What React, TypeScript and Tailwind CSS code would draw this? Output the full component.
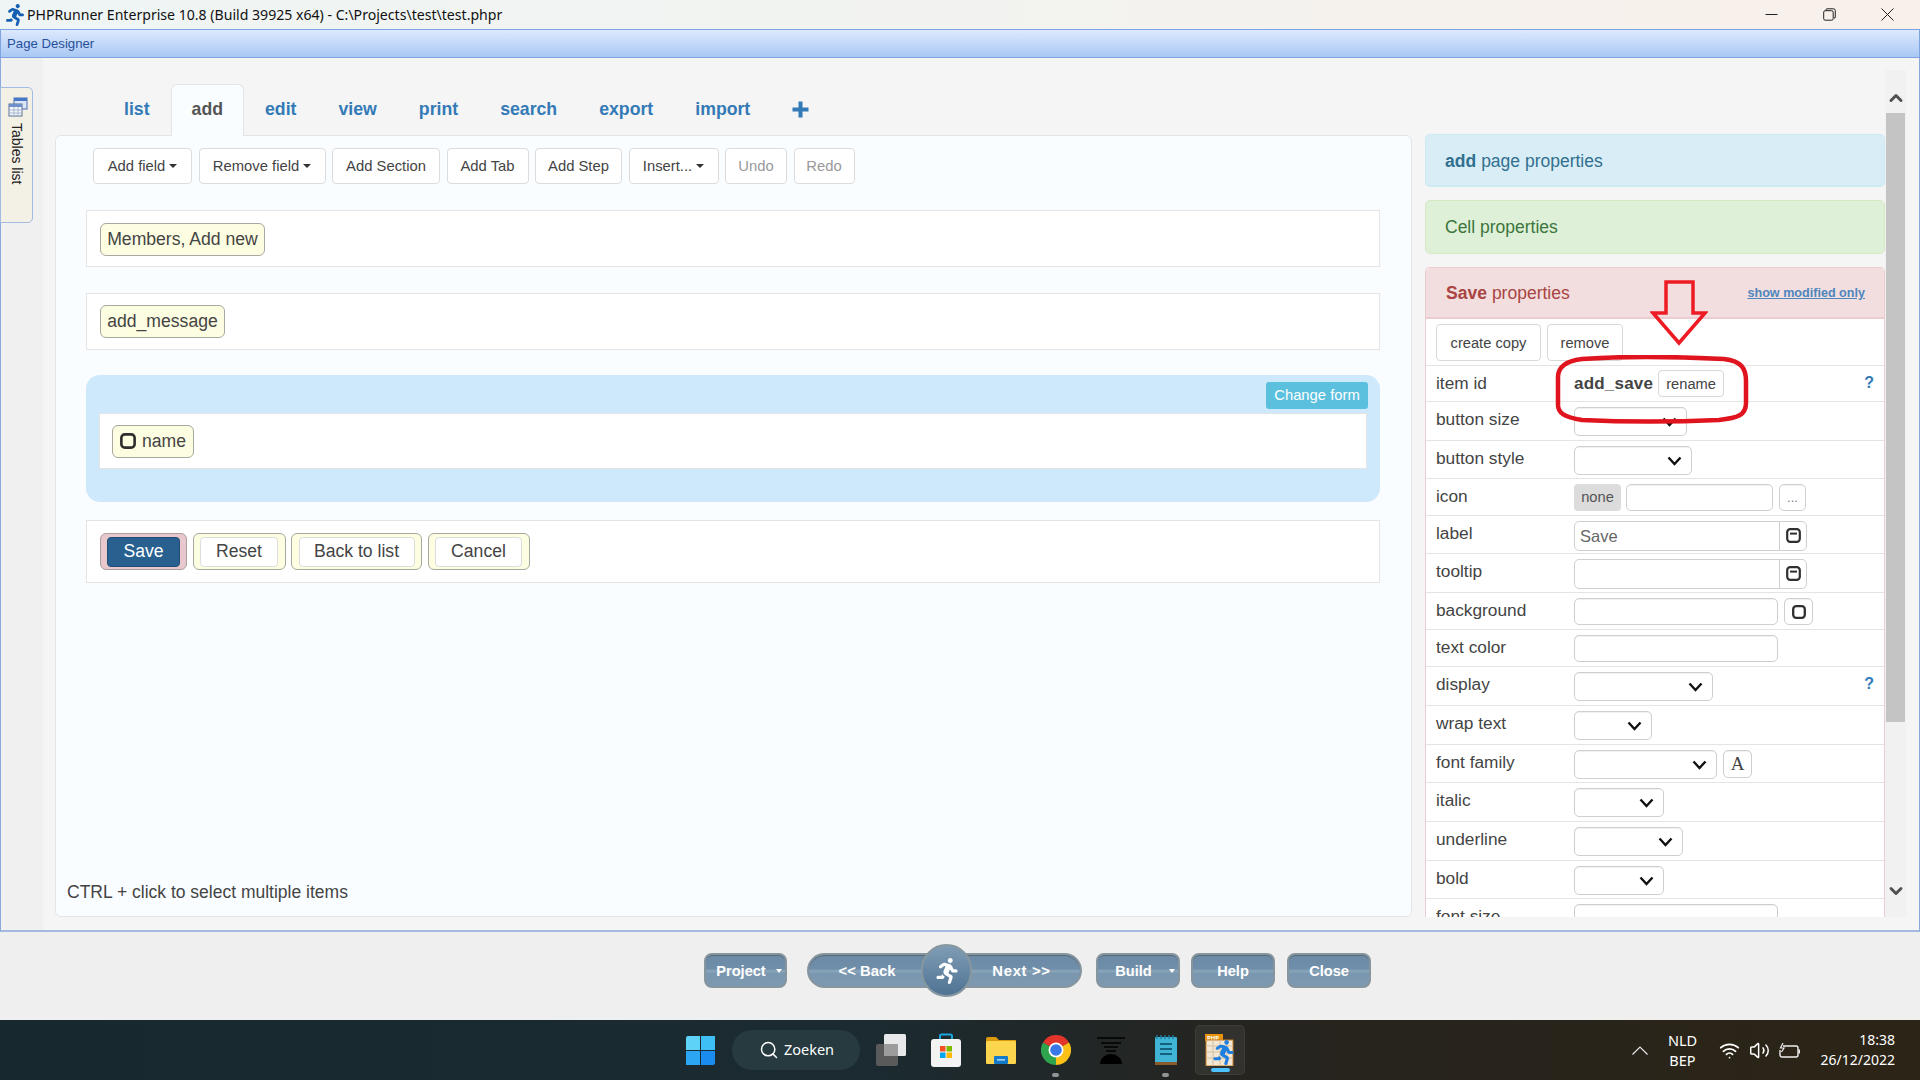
import React from "react";
import { FaRunning } from "react-icons/fa";
import { Search, Wifi, Volume2, ChevronUp } from "lucide-react";

function Chevron({ className = "" }: { className?: string }) {
  return (
    <svg width="15" height="10" viewBox="0 0 15 10" className={className}>
      <path d="M1.5 1.5 L7.5 8 L13.5 1.5" fill="none" stroke="#111" strokeWidth="2.4" />
    </svg>
  );
}

function Sel({ w }: { w: string }) {
  return (
    <div className={`${w} h-[29px] mt-[5px] bg-white border border-[#cfcfcf] rounded-[5px] flex items-center justify-end pr-[9px] shadow-[inset_0_1px_1px_rgba(0,0,0,0.06)]`}>
      <Chevron />
    </div>
  );
}

function Inp({ className = "", children }: { className?: string; children?: React.ReactNode }) {
  return (
    <div className={`h-[27px] mt-[5px] bg-white border border-[#cfcfcf] rounded-[5px] flex items-center shadow-[inset_0_1px_1px_rgba(0,0,0,0.06)] ${className}`}>
      {children}
    </div>
  );
}

function LangIcon() {
  return (
    <svg width="15" height="15" viewBox="0 0 15 15">
      <rect x="1.2" y="1.2" width="12.6" height="12.6" rx="3" fill="none" stroke="#2f2f2f" strokeWidth="2.2" />
      <rect x="4" y="4.6" width="7" height="2" fill="#2f2f2f" />
    </svg>
  );
}

function SquareIcon({ size = 14 }: { size?: number }) {
  return (
    <svg width={size} height={size} viewBox="0 0 14 14">
      <rect x="1.2" y="1.2" width="11.6" height="11.6" rx="3" fill="none" stroke="#2f2f2f" strokeWidth="2.3" />
    </svg>
  );
}

function InputGroup({ value }: { value?: string }) {
  return (
    <div className="w-[233px] h-[30px] mt-[5px] bg-white border border-[#cfcfcf] rounded-[5px] flex items-center">
      <div className="w-[204px] pl-[5px] text-[16.5px] text-[#666]">{value}</div>
      <div className="flex-1 h-full border-l border-[#cfcfcf] flex items-center justify-center pb-[2px]">
        <LangIcon />
      </div>
    </div>
  );
}

function Row({ label, h, help, children }: { label: string; h: string; help?: boolean; children?: React.ReactNode }) {
  return (
    <div className={`${h} shrink-0 border-b border-[#e4e4e4] flex items-start`}>
      <div className="w-[148px] pl-[10px] pt-[7px] text-[17.3px] leading-[20px] text-[#444] shrink-0">{label}</div>
      <div className="flex items-start flex-1">{children}</div>
      {help && <div className="pt-[7px] pr-[10px] text-[16px] font-bold leading-[20px] text-[#337ab7]">?</div>}
    </div>
  );
}

function Tool({ w, muted, caret, children }: { w: string; muted?: boolean; caret?: boolean; children: React.ReactNode }) {
  return (
    <div className={`${w} h-[36px] bg-white border border-[#dcdcdc] rounded-[4px] flex items-center justify-center gap-[4px] text-[14.8px] ${muted ? "text-[#999]" : "text-[#444]"}`}>
      {children}
      {caret && <span className="w-0 h-0 border-x-[4px] border-t-[4px] border-x-transparent border-t-[#333]" />}
    </div>
  );
}

function Chip({ children, className = "" }: { children: React.ReactNode; className?: string }) {
  return (
    <div className={`h-[33px] bg-[#fdfde2] border border-[#a8a8a0] rounded-[6px] flex items-center text-[17.6px] text-[#444] ${className}`}>
      {children}
    </div>
  );
}

function FormBtn({ outer, inner, label }: { outer: string; inner: string; label: string }) {
  return (
    <div className={`${outer} h-[37px] bg-[#fdfde2] border border-[#a8a8a0] rounded-[6px] flex items-center justify-center`}>
      <div className={`${inner} h-[30px] bg-white border border-[#ddd] rounded-[4px] flex items-center justify-center text-[17.6px] text-[#444]`}>{label}</div>
    </div>
  );
}

const steel = "bg-[linear-gradient(to_bottom,#6c8aa4_0%,#6f8eaa_44%,#8ba6bb_52%,#7a97af_60%,#7c99b1_100%)]";

function Steel({ w, caret, children }: { w: string; caret?: boolean; children: React.ReactNode }) {
  return (
    <div className={`${w} h-[35px] ${steel} border-2 border-[#87959e] rounded-[8px] shadow-[inset_0_1px_0_#566a7a] relative flex items-center justify-center pt-[2px] text-white font-bold text-[14.6px] ${caret ? "pr-[9px]" : ""}`}>
      {children}
      {caret && <span className="absolute right-[3px] top-[14px] w-0 h-0 border-x-[3px] border-t-[4px] border-x-transparent border-t-white" />}
    </div>
  );
}

function Slot({ dot, children }: { dot?: boolean; children: React.ReactNode }) {
  return (
    <div className="w-[55px] h-[60px] flex items-center justify-center relative">
      {children}
      {dot && <span className="absolute bottom-[3px] left-[24px] w-[7px] h-[4px] rounded-full bg-[#8f9496]" />}
    </div>
  );
}

const tabs = ["list", "add", "edit", "view", "print", "search", "export", "import"];

export default function App() {
  return (
    <div className="w-[1920px] h-[1080px] relative overflow-hidden flex flex-col font-['Liberation_Sans',Arial,sans-serif] text-[#333]">
      {/* title bar */}
      <div className="h-[29px] shrink-0 flex items-center bg-[linear-gradient(to_right,#eff5f5,#f2f3f0_50%,#f9f0ea)]">
        <div className="w-[27px] pl-[2px] shrink-0 flex justify-center">
          <FaRunning className="text-[#1660b4]" size={22} />
        </div>
        <div className="font-['Noto_Sans',sans-serif] text-[14.1px] text-[#111] whitespace-nowrap">
          {"PHPRunner Enterprise 10.8 (Build 39925 x64) - C:\\Projects\\test\\test.phpr"}
        </div>
        <div className="ml-auto flex items-center pr-[26px] gap-[45px]">
          <svg width="13" height="13" viewBox="0 0 13 13"><path d="M0.5 6.5 H12.5" stroke="#222" strokeWidth="1" /></svg>
          <svg width="13" height="13" viewBox="0 0 13 13"><rect x="0.7" y="2.7" width="9.5" height="9.5" rx="1.5" fill="none" stroke="#222" /><path d="M3 2.5 V1.8 A1 1 0 0 1 4 0.8 H10.5 A1.8 1.8 0 0 1 12.3 2.6 V9 A1 1 0 0 1 11 10" fill="none" stroke="#222" /></svg>
          <svg width="13" height="13" viewBox="0 0 13 13"><path d="M0.5 0.5 L12.5 12.5 M12.5 0.5 L0.5 12.5" stroke="#222" strokeWidth="1" /></svg>
        </div>
      </div>

      {/* page designer */}
      <div className="h-[29px] shrink-0 border border-[#7ea3e2] bg-[linear-gradient(to_bottom,#dde9fd,#a9c8f4)] flex items-center pl-[6px] text-[13.2px] text-[#27509c]">
        Page Designer
      </div>

      {/* main */}
      <div className="h-[874px] shrink-0 flex border-x border-b-2 border-x-[#8aa8dc] border-b-[#a3b9e0] bg-[#f5f5f5]">
        {/* left strip */}
        <div className="w-[54px] shrink-0 flex">
          <div className="w-[42px] bg-[#f0f0f0] pt-[29px]">
            <div className="w-[33px] h-[136px] -ml-px bg-[#f3f0e6] border border-[#a3bbe2] rounded-r-[5px] flex flex-col items-center pt-[9px]">
              <svg width="20" height="20" viewBox="0 0 20 20" className="ml-[2px]">
                <rect x="6" y="1" width="13" height="11" fill="#dbe6f7" stroke="#4a6fb5" />
                <rect x="6" y="1" width="13" height="3" fill="#4a78c8" />
                <rect x="1" y="7" width="13" height="12" fill="#f4f7fc" stroke="#5a6f95" />
                <rect x="1" y="7" width="13" height="3" fill="#6d8fca" />
                <path d="M1 13 H14 M1 16 H14 M6 10 V19 M10 10 V19" stroke="#a8b6cf" />
              </svg>
              <div className="mt-[6px] text-[14px] leading-[16px] text-[#222] [writing-mode:vertical-rl]">Tables list</div>
            </div>
          </div>
        </div>

        {/* center */}
        <div className="w-[1357px] shrink-0 flex flex-col">
          <div className="h-[78px] shrink-0 flex items-end pl-[48px] relative z-10 -mb-px">
            {tabs.map((t) =>
              t === "add" ? (
                <div key={t} className="h-[52px] px-[20px] pb-[2px] flex items-center bg-[#fafdff] border border-b-0 border-[#e4e4e4] rounded-t-[6px] text-[17.7px] font-bold text-[#555]">{t}</div>
              ) : (
                <div key={t} className="h-[52px] px-[21px] pb-[2px] flex items-center text-[17.7px] font-bold text-[#337ab7]">{t}</div>
              )
            )}
            <div className="h-[52px] px-[21px] pb-[2px] flex items-center">
              <svg width="17" height="17" viewBox="0 0 17 17"><path d="M8.5 0.5 V16.5 M0.5 8.5 H16.5" stroke="#337ab7" strokeWidth="4" /></svg>
            </div>
          </div>
          <div className="flex-1 mb-[13px] bg-[#fafdff] border border-[#e4e4e4] rounded-[6px] flex flex-col">
            <div className="pt-[12px] pl-[37px] flex gap-[6.5px]">
              <Tool w="w-[99px]" caret>Add field</Tool>
              <Tool w="w-[127px]" caret>Remove field</Tool>
              <Tool w="w-[108px]">Add Section</Tool>
              <Tool w="w-[82px]">Add Tab</Tool>
              <Tool w="w-[87px]">Add Step</Tool>
              <Tool w="w-[90px]" caret>Insert...</Tool>
              <Tool w="w-[62px]" muted>Undo</Tool>
              <Tool w="w-[61px]" muted>Redo</Tool>
            </div>

            <div className="ml-[30px] w-[1294px] mt-[26px] flex flex-col">
              <div className="h-[57px] bg-white border border-[#e4e4e4] flex items-center pl-[13px] pt-[1px]">
                <Chip className="w-[165px] justify-center">Members, Add new</Chip>
              </div>
              <div className="h-[57px] mt-[26px] bg-white border border-[#e4e4e4] flex items-center pl-[13px]">
                <Chip className="w-[125px] justify-center">add_message</Chip>
              </div>
              <div className="h-[127px] mt-[25px] bg-[#cfe9fc] rounded-[14px] px-[13px] flex flex-col">
                <div className="h-[38px] shrink-0 flex justify-end pt-[7px] -mr-px">
                  <div className="w-[102px] h-[27px] bg-[#5bc0de] rounded-[3px] flex items-center justify-center text-[14.8px] text-white">Change form</div>
                </div>
                <div className="h-[56px] bg-white border border-[#e4e4e4] flex items-center pl-[12px]">
                  <Chip className="w-[82px] pl-[7px] gap-[6px]">
                    <SquareIcon size={16} /> name
                  </Chip>
                </div>
              </div>
              <div className="h-[63px] mt-[18px] bg-white border border-[#e4e4e4] flex items-center pl-[13px] gap-[5.5px]">
                <div className="w-[87px] h-[37px] bg-[#e8c8cc] border border-[#a8a0a0] rounded-[6px] flex items-center justify-center">
                  <div className="w-[73px] h-[30px] bg-[#286090] border border-[#204d74] rounded-[4px] flex items-center justify-center text-[17.6px] text-white">Save</div>
                </div>
                <FormBtn outer="w-[93px]" inner="w-[78px]" label="Reset" />
                <FormBtn outer="w-[131px]" inner="w-[116px]" label="Back to list" />
                <FormBtn outer="w-[102px]" inner="w-[87px]" label="Cancel" />
              </div>
            </div>

            <div className="mt-auto mb-[14px] pl-[11px] text-[17.5px] leading-[20px] text-[#444]">CTRL + click to select multiple items</div>
          </div>
        </div>

        {/* right */}
        <div className="w-[507px] shrink-0 pl-[13px] pt-[12px] pb-[13px] flex">
          <div className="w-[460px] shrink-0 pt-[64px] flex flex-col overflow-hidden">
            <div className="h-[53px] shrink-0 bg-[#d9edf7] border-x border-t border-b-2 border-[#cdeaf3] rounded-[5px] flex items-center pt-[2px] pl-[19px] text-[17.5px] text-[#31708f]">
              <b className="mr-[5px]">add</b> page properties
            </div>
            <div className="h-[54px] shrink-0 mt-[13px] bg-[#dff0d8] border border-[#d6e9c6] rounded-[5px] flex items-center pt-[1px] pl-[19px] text-[17.5px] text-[#3c763d]">
              Cell properties
            </div>
            <div className="mt-[13px] flex-1 min-h-0 flex flex-col border-x border-[#ebccd1] overflow-hidden rounded-t-[5px]">
              <div className="h-[52px] shrink-0 bg-[#f2dede] border-t border-b-2 border-[#ebccd1] flex items-center pt-[1px] pl-[20px] pr-[19px] text-[17.5px] text-[#a94442]">
                <b className="mr-[5px]">Save</b> properties
                <span className="ml-auto text-[12.6px] font-bold underline text-[#4f86bd]">show modified only</span>
              </div>
              <div className="bg-white flex-1 min-h-0 overflow-hidden">
                <div className="h-[47px] border-b border-[#e4e4e4] pt-[5px] pl-[10px] flex gap-[6px]">
                  <div className="w-[105px] h-[37px] pt-[1px] border border-[#d8d8d8] rounded-[4px] flex items-center justify-center text-[14.7px] text-[#444]">create copy</div>
                  <div className="w-[76px] h-[37px] pt-[1px] border border-[#d8d8d8] rounded-[4px] flex items-center justify-center text-[14.7px] text-[#444]">remove</div>
                </div>
                <Row label="item id" h="h-[36px]" help>
                  <div className="pt-[7px] text-[17px] font-bold leading-[22px] tracking-[0.2px] text-[#444]">add_save</div>
                  <div className="ml-[5px] mt-[4px] w-[66px] h-[27px] pt-[1px] border border-[#d8d8d8] rounded-[4px] flex items-center justify-center text-[14.7px] text-[#444]">rename</div>
                </Row>
                <Row label="button size" h="h-[39px]"><Sel w="w-[113px]" /></Row>
                <Row label="button style" h="h-[38px]"><Sel w="w-[118px]" /></Row>
                <Row label="icon" h="h-[37px]">
                  <div className="w-[47px] h-[27px] mt-[5px] bg-[#dcdcdc] rounded-[4px] flex items-center justify-center text-[14.7px] text-[#555]">none</div>
                  <Inp className="w-[147px] ml-[5px]" />
                  <Inp className="w-[27px] ml-[6px] justify-center text-[13px] text-[#777]">...</Inp>
                </Row>
                <Row label="label" h="h-[38px]"><InputGroup value="Save" /></Row>
                <Row label="tooltip" h="h-[39px]"><InputGroup /></Row>
                <Row label="background" h="h-[37px]">
                  <Inp className="w-[204px]" />
                  <Inp className="w-[29px] ml-[6px] justify-center"><SquareIcon /></Inp>
                </Row>
                <Row label="text color" h="h-[37px]"><Inp className="w-[204px]" /></Row>
                <Row label="display" h="h-[39px]" help><Sel w="w-[139px]" /></Row>
                <Row label="wrap text" h="h-[39px]"><Sel w="w-[78px]" /></Row>
                <Row label="font family" h="h-[38px]">
                  <Sel w="w-[143px]" />
                  <Inp className="w-[29px] ml-[6px] justify-center font-['Liberation_Serif',serif] text-[19px] text-[#444] !h-[28px]">A</Inp>
                </Row>
                <Row label="italic" h="h-[39px]"><Sel w="w-[90px]" /></Row>
                <Row label="underline" h="h-[39px]"><Sel w="w-[109px]" /></Row>
                <Row label="bold" h="h-[38px]"><Sel w="w-[90px]" /></Row>
                <Row label="font size" h="h-[38px]"><Inp className="w-[204px]" /></Row>
              </div>
            </div>
          </div>
          <div className="w-[21px] shrink-0 bg-[#f1f1f1] flex flex-col items-center">
            <div className="h-[43px] shrink-0 flex items-center justify-center pt-[12px]">
              <ChevronUp size={20} strokeWidth={3.5} className="text-[#505050]" />
            </div>
            <div className="w-[19px] h-[609px] bg-[#c4c4c4] shrink-0" />
            <div className="flex-1 flex items-end justify-center pb-[16px]">
              <ChevronUp size={20} strokeWidth={3.5} className="text-[#505050] rotate-180" />
            </div>
          </div>
        </div>
      </div>

      {/* footer */}
      <div className="h-[88px] shrink-0 bg-[#efefef] pt-[21px] pl-[704px] flex items-start">
        <Steel w="w-[83px]" caret>Project</Steel>
        <div className="ml-[20px] w-[275px] h-[35px] relative flex">
          <div className={`w-[138px] h-[35px] ${steel} border-2 border-r-0 border-[#87959e] rounded-l-full shadow-[inset_0_1px_0_#566a7a] flex items-center justify-center pt-[2px] pr-[20px] text-white font-bold text-[14.8px]`}>{"<< Back"}</div>
          <div className={`w-[137px] h-[35px] ${steel} border-2 border-l-0 border-[#87959e] rounded-r-full shadow-[inset_0_1px_0_#566a7a] flex items-center justify-center pt-[2px] pl-[18px] text-white font-bold text-[14.8px] tracking-[0.7px]`}>{"Next >>"}</div>
          <div className="absolute left-[114px] top-[-9px] w-[51px] h-[53px] rounded-full border-2 border-[#87979f] bg-[linear-gradient(to_bottom,#7f9cb4,#4f7394)] flex items-center justify-center">
            <FaRunning className="text-white" size={26} />
          </div>
        </div>
        <div className="ml-[14px]"><Steel w="w-[84px]" caret>Build</Steel></div>
        <div className="ml-[11px]"><Steel w="w-[84px]">Help</Steel></div>
        <div className="ml-[12px]"><Steel w="w-[84px]">Close</Steel></div>
      </div>

      {/* taskbar */}
      <div className="h-[60px] shrink-0 flex items-center pl-[686px] bg-[linear-gradient(to_right,#17282f,#1b2b31_45%,#26241f_65%,#2c2416)] text-white font-['Noto_Sans',sans-serif]">
        <div className="w-[29px] h-[29px] shrink-0 grid grid-cols-2 gap-[1px]">
          <div className="bg-[#5ed2f7] rounded-tl-[2px]" />
          <div className="bg-[#3fc0f5]" />
          <div className="bg-[#2aa6f3]" />
          <div className="bg-[#1a8cf0] rounded-br-[2px]" />
        </div>
        <div className="ml-[17px] w-[128px] h-[40px] shrink-0 rounded-full bg-[#263a40] flex items-center justify-center gap-[5px] pl-[1px] text-[14.5px]">
          <Search size={20} strokeWidth={1.8} /> Zoeken
        </div>
        <div className="ml-[3px] flex items-center">
          <Slot>
            <svg width="30" height="32" viewBox="0 0 30 32">
              <rect x="0" y="10" width="22" height="22" rx="2" fill="#5a5a5a" />
              <rect x="8" y="0" width="22" height="22" rx="1.5" fill="#e6e8ea" />
              <rect x="8" y="10" width="14" height="12" fill="#9c9c9c" />
            </svg>
          </Slot>
          <Slot>
            <svg width="30" height="34" viewBox="0 0 30 34">
              <path d="M9 8 V3 A1.5 1.5 0 0 1 10.5 1.5 H19.5 A1.5 1.5 0 0 1 21 3 V8" fill="none" stroke="#1aa7e0" strokeWidth="2" />
              <rect x="0" y="6" width="30" height="28" rx="3" fill="#f3f3f3" />
              <rect x="9" y="13" width="5.5" height="5.5" fill="#f25022" />
              <rect x="15.5" y="13" width="5.5" height="5.5" fill="#7fba00" />
              <rect x="9" y="19.5" width="5.5" height="5.5" fill="#00a4ef" />
              <rect x="15.5" y="19.5" width="5.5" height="5.5" fill="#ffb900" />
            </svg>
          </Slot>
          <Slot>
            <svg width="30" height="28" viewBox="0 0 30 28">
              <path d="M0 3 A2 2 0 0 1 2 1 H10 L13 4 H30 V26 A2 2 0 0 1 28 28 H2 A2 2 0 0 1 0 26 Z" fill="#d99a0e" />
              <rect x="0" y="5" width="30" height="23" rx="1.5" fill="#fcd54e" />
              <rect x="8" y="20" width="14" height="8" rx="1" fill="#1379c9" />
              <rect x="11" y="23" width="8" height="1.6" fill="#9fd3f5" />
            </svg>
          </Slot>
          <Slot dot>
            <svg width="30" height="30" viewBox="0 0 30 30">
              <path d="M15 15 L2 7.5 A15 15 0 0 1 28 7.5 Z" fill="#e3352b" />
              <path d="M15 15 L2 7.5 A15 15 0 0 0 15 30 Z" fill="#2fa44f" />
              <path d="M15 15 L15 30 A15 15 0 0 0 28 7.5 Z" fill="#fbc116" />
              <circle cx="15" cy="15" r="7.5" fill="#fff" />
              <circle cx="15" cy="15" r="5.8" fill="#3b78e7" />
            </svg>
          </Slot>
          <Slot>
            <svg width="30" height="27" viewBox="0 0 30 27">
              <path d="M1 1 H29 M5 6 H25 M8 10 H22 M10 14 H20" stroke="#000" strokeWidth="1.5" />
              <path d="M4 27 A11 10 0 0 1 26 27 Z" fill="#000" />
            </svg>
          </Slot>
          <Slot dot>
            <svg width="22" height="30" viewBox="0 0 22 30">
              <rect x="0" y="2" width="22" height="28" rx="1" fill="#3fb4d4" />
              <rect x="0" y="27" width="22" height="3" fill="#8a5a2a" />
              <path d="M2 0 V4 M6 0 V4 M10 0 V4 M14 0 V4 M18 0 V4" stroke="#1a7fa0" strokeWidth="1.4" />
              <path d="M5 9 H17 M5 14 H17 M5 19 H17" stroke="#13617f" strokeWidth="2" />
            </svg>
          </Slot>
          <div className="w-[50px] h-[50px] ml-[2px] rounded-[5px] bg-[#ffffff10] border border-[#ffffff0d] relative flex items-center justify-center">
            <svg width="30" height="32" viewBox="0 0 30 32">
              <rect x="0" y="0" width="18" height="7" fill="#e8930c" />
              <text x="2" y="6" fontSize="6" fontWeight="bold" fill="#fff">PHP</text>
              <rect x="1" y="6" width="27" height="26" fill="#f3e7d3" stroke="#c87a20" />
              <path d="M1 12 H28 M1 18 H28 M1 24 H28 M8 6 V32 M15 6 V32 M22 6 V32" stroke="#cfbfa5" />
            </svg>
            <FaRunning className="absolute left-[15px] top-[14px] text-[#1f7fe0]" size={25} />
            <span className="absolute bottom-[2px] left-[15px] w-[19px] h-[4px] rounded-full bg-[#4cc2ff]" />
          </div>
        </div>
        <div className="ml-auto flex items-center pr-[25px]">
          <svg width="16" height="9" viewBox="0 0 16 9"><path d="M0.5 8.5 L8 1 L15.5 8.5" fill="none" stroke="#e8e8e8" strokeWidth="1.2" /></svg>
          <div className="ml-[17px] w-[35px] text-center text-[14.5px] leading-[20px]">NLD<br />BEP</div>
          <Wifi size={21} strokeWidth={2} className="ml-[19px]" />
          <Volume2 size={21} strokeWidth={1.7} className="ml-[9px]" />
          <svg width="21" height="15" viewBox="0 0 21 15" className="ml-[9px]">
            <path d="M4 3 H17 A2 2 0 0 1 19 5 V12 A2 2 0 0 1 17 14 H3 A2 2 0 0 1 1 12 V7" fill="none" stroke="#eee" strokeWidth="1.4" />
            <rect x="19.5" y="6.5" width="1.5" height="4" fill="#eee" />
            <path d="M4 0 L1.5 5 H5 L2.5 9" fill="none" stroke="#eee" strokeWidth="1.2" />
          </svg>
          <div className="ml-[20px] w-[75px] text-right text-[14px] leading-[20px]">18:38<br />26/12/2022</div>
        </div>
      </div>

      {/* red annotation overlays */}
      <svg className="absolute left-[1650px] top-[279px]" width="58" height="68" viewBox="0 0 58 68">
        <path d="M16 3 H43 V34 H55 L29 64 L3 34 H16 Z" fill="none" stroke="#ed1c24" strokeWidth="3.5" />
      </svg>
      <svg className="absolute left-[1554px] top-[355px]" width="196" height="70" viewBox="0 0 196 70">
        <path d="M28 4 C70 1 130 2 170 4 C188 6 192 14 192 26 V48 C192 60 184 63 165 65 C120 67 70 67 28 65 C10 62 4 58 4 50 V22 C4 12 12 6 28 4 Z" fill="none" stroke="#e0141e" strokeWidth="4.5" />
      </svg>
    </div>
  );
}
